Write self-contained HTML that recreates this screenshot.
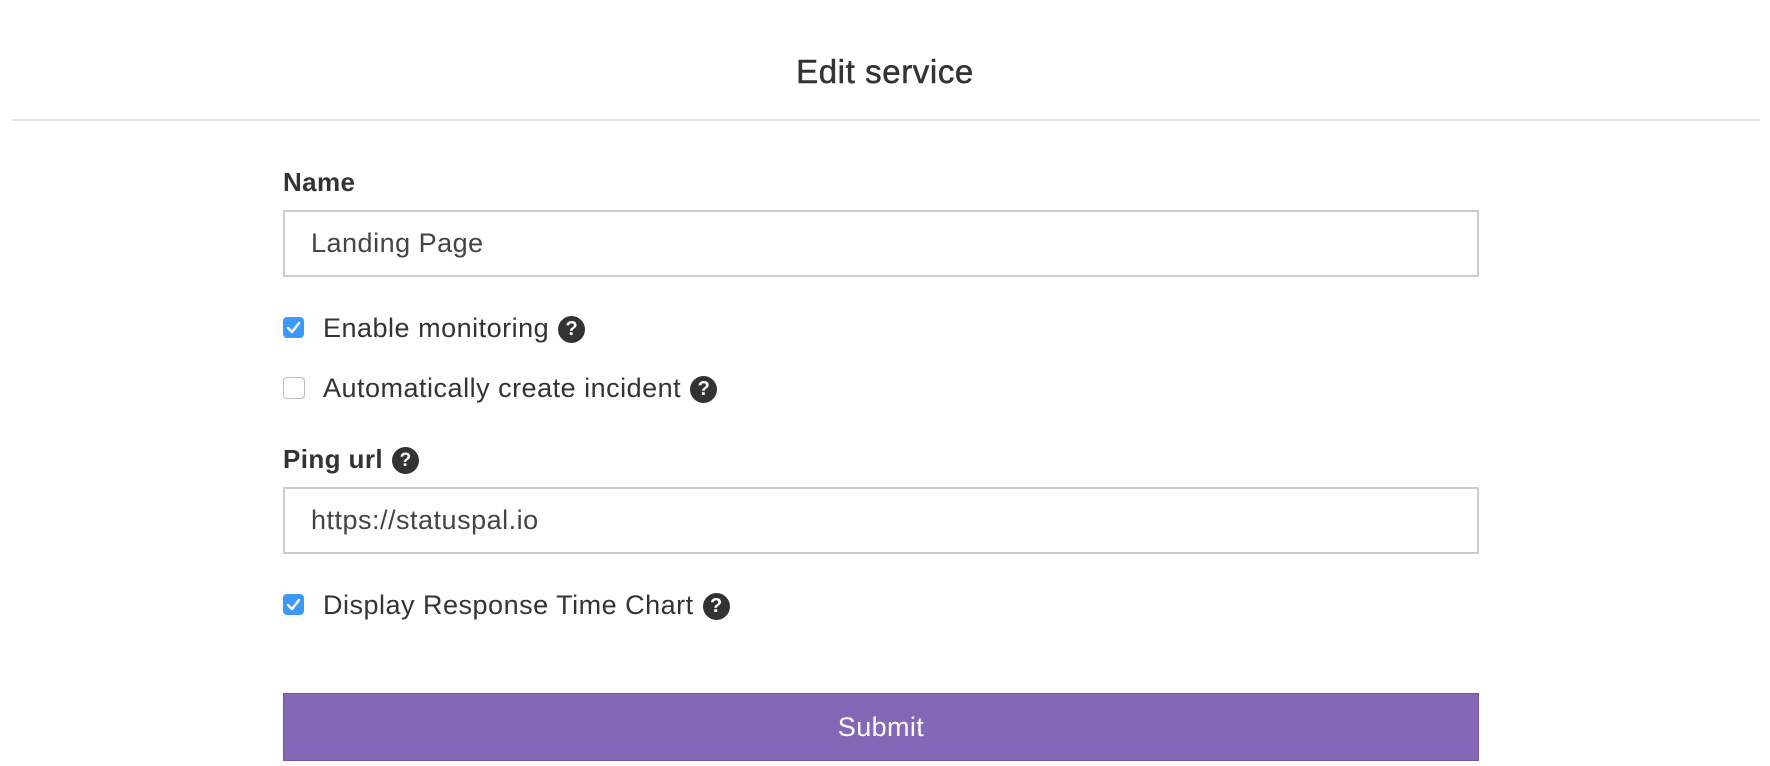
<!DOCTYPE html>
<html><head><style>
body{margin:0;width:1770px;height:766px;background:#fff;font-family:"Liberation Sans",Arial,sans-serif;color:#333;position:relative;overflow:hidden}
.a{position:absolute;white-space:nowrap}
.title{left:0;width:1770px;text-align:center;top:52px;font-size:33px;line-height:40px;letter-spacing:0.6px;-webkit-text-stroke:0.5px #333}
.hr{left:12px;width:1748px;top:119px;height:2px;background:#e6e6e6}
.lbl{font-weight:bold;font-size:26px;line-height:30px;left:283px;letter-spacing:0.4px}
.inp{left:283px;width:1166px;height:64px;border:2px solid #ccc;font-size:27px;line-height:64px;padding-left:26px;box-sizing:content-box;color:#444;letter-spacing:0.5px}
.cb{left:283px;width:21px;height:21px;border-radius:4px}
.on{background:#3b99fc}
.off{border:1px solid #bbb;width:20px;height:20px;background:#fff}
.txt{left:323px;font-size:27px;line-height:32px;letter-spacing:0.5px}
.q{display:inline-block;width:27px;height:27px;border-radius:50%;background:#333;color:#fff;font-weight:bold;font-size:20px;line-height:27px;text-align:center;vertical-align:2px;margin-left:9px;letter-spacing:0}
.btn{left:283px;width:1194px;top:693px;height:66px;background:#8467b7;border:1px solid #7552af;color:#fff;font-size:27px;line-height:66px;text-align:center;letter-spacing:0.4px}
</style></head><body>
<div class="a title">Edit service</div>
<div class="a hr"></div>
<div class="a lbl" style="top:167px">Name</div>
<div class="a inp" style="top:210px;height:63px;line-height:63px">Landing Page</div>
<div class="a cb on" style="top:317px"><svg width="21" height="21"><path d="M5 11 L9 15 L16 6" stroke="#fff" stroke-width="2.4" fill="none" stroke-linecap="round" stroke-linejoin="round"/></svg></div>
<div class="a txt" style="top:312px">Enable monitoring<span class="q">?</span></div>
<div class="a cb off" style="top:377px"></div>
<div class="a txt" style="top:372px">Automatically create incident<span class="q">?</span></div>
<div class="a lbl" style="top:444px">Ping url<span class="q" style="font-size:19px">?</span></div>
<div class="a inp" style="top:487px;height:63px;line-height:63px">https://statuspal.io</div>
<div class="a cb on" style="top:594px"><svg width="21" height="21"><path d="M5 11 L9 15 L16 6" stroke="#fff" stroke-width="2.4" fill="none" stroke-linecap="round" stroke-linejoin="round"/></svg></div>
<div class="a txt" style="top:589px">Display Response Time Chart<span class="q">?</span></div>
<div class="a btn">Submit</div>
</body></html>
